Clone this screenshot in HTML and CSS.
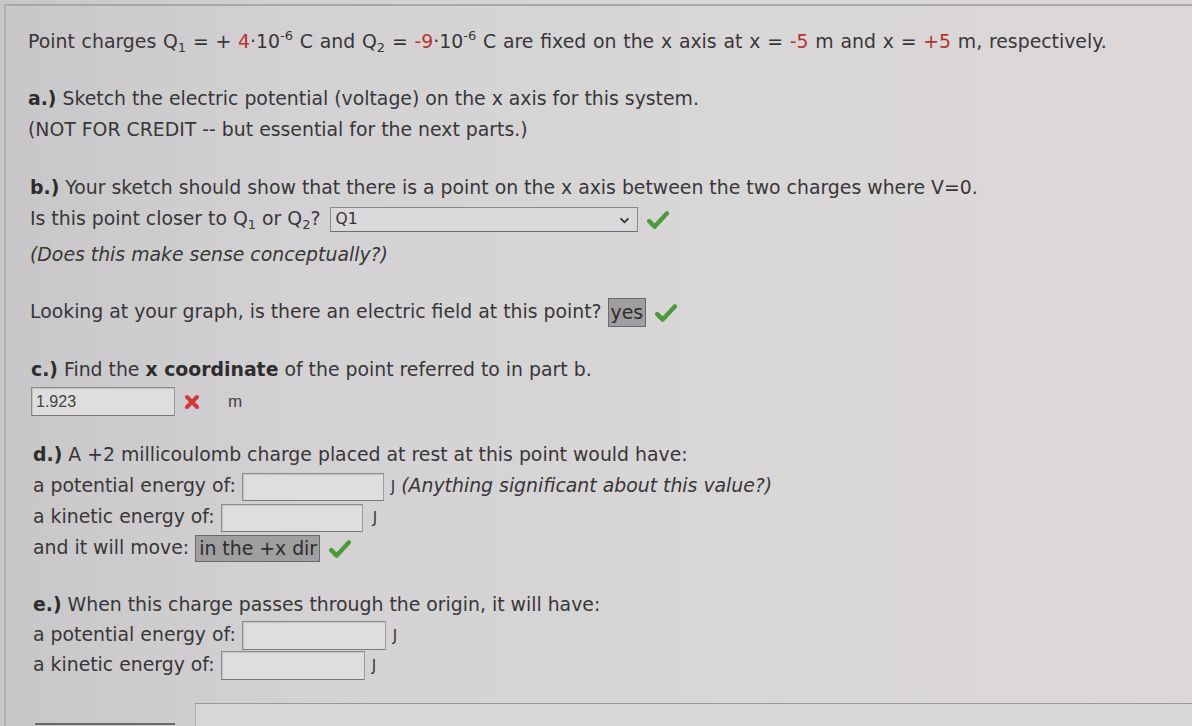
FILE: index.html
```html
<!DOCTYPE html>
<html>
<head>
<meta charset="utf-8">
<link rel="stylesheet" href="styles.css">
</head>
<body>
<div class="frame">
  <div class="content">
    <div class="sec s1">
      <div class="line intro">Point charges Q<sub>1</sub> = + <span class="red">4</span>·10<sup>-6</sup> C and Q<sub>2</sub> = <span class="red">-9</span>·10<sup>-6</sup> C are fixed on the x axis at x = <span class="red">-5</span> m and x = <span class="red">+5</span> m, respectively.</div>
    </div>

    <div class="sec sa">
      <div class="line"><b>a.)</b> Sketch the electric potential (voltage) on the x axis for this system.</div>
      <div class="line">(NOT FOR CREDIT -- but essential for the next parts.)</div>
    </div>

    <div class="sec sb">
      <div class="line"><b>b.)</b> Your sketch should show that there is a point on the x axis between the two charges where V=0.</div>
      <div class="line">Is this point closer to Q<sub>1</sub> or Q<sub>2</sub>? <span class="select"><span class="sel-val">Q1</span><svg class="chev" viewBox="0 0 12 8" width="11" height="7"><path d="M1.5 1.5 L6 6 L10.5 1.5" fill="none" stroke="#333" stroke-width="2"/></svg></span><svg class="check" viewBox="0 0 20 16" width="22" height="18"><path d="M2 9 L7 14 L18 2" fill="none" stroke="#4d9a3c" stroke-width="4" stroke-linecap="round" stroke-linejoin="round"/></svg></div>
      <div class="line gap"><i>(Does this make sense conceptually?)</i></div>
    </div>

    <div class="sec sl">
      <div class="line">Looking at your graph, is there an electric field at this point? <span class="chosen yes">yes</span><svg class="check" viewBox="0 0 20 16" width="22" height="18"><path d="M2 9 L7 14 L18 2" fill="none" stroke="#4d9a3c" stroke-width="4" stroke-linecap="round" stroke-linejoin="round"/></svg></div>
    </div>

    <div class="sec sc">
      <div class="line"><b>c.)</b> Find the <b>x coordinate</b> of the point referred to in part b.</div>
      <div class="line"><span class="input w144 val">1.923</span><svg class="cross" viewBox="0 0 16 16" width="16" height="16"><path d="M3 3 L13 13 M13 3 L3 13" stroke="#d03a3a" stroke-width="4" stroke-linecap="round"/></svg><span class="unit-m">m</span></div>
    </div>

    <div class="sec sd">
      <div class="line"><b>d.)</b> A +2 millicoulomb charge placed at rest at this point would have:</div>
      <div class="line">a potential energy of: <span class="input w142"></span><span class="unit">J</span> <i>(Anything significant about this value?)</i></div>
      <div class="line">a kinetic energy of: <span class="input w142"></span><span class="unit u2">J</span></div>
      <div class="line">and it will move: <span class="chosen dir">in the +x dir</span><svg class="check" viewBox="0 0 20 16" width="22" height="18"><path d="M2 9 L7 14 L18 2" fill="none" stroke="#4d9a3c" stroke-width="4" stroke-linecap="round" stroke-linejoin="round"/></svg></div>
    </div>

    <div class="sec se">
      <div class="line"><b>e.)</b> When this charge passes through the origin, it will have:</div>
      <div class="line l2">a potential energy of: <span class="input w144"></span><span class="unit">J</span></div>
      <div class="line l2">a kinetic energy of: <span class="input w144"></span><span class="unit">J</span></div>
    </div>

    <div class="bottom">
      <div class="btn-stub"></div>
      <div class="box-stub"></div>
    </div>
  </div>
</div>
</body>
</html>
```

FILE: styles.css
```css
html, body {
  margin: 0;
  padding: 0;
  height: 100%;
  overflow: hidden;
}
body {
  background: linear-gradient(90deg, #c8c6c8 0%, #d3d1d3 25%, #d9d6d8 60%, #dcd8da 100%);
  font-family: "DejaVu Sans", Verdana, sans-serif;
  font-size: 18.85px;
  color: #383638;
}
.frame {
  margin: 4px 0 0 4px;
  border-top: 2px solid #a9a7a9;
  border-left: 2px solid #b2b0b2;
  height: 730px;
  overflow: hidden;
}
.content {
  padding-left: 22px;
}
.sec { margin-top: 26px; }
.s1 { margin-top: 20px; }
.sb { margin-top: 27px; }
.sc { margin-top: 27px; }
.sd { margin-top: 23px; }
.line {
  height: 31px;
  line-height: 31px;
  white-space: nowrap;
}
.intro { word-spacing: 0.8px; }
.line.gap { margin-top: 5px; }
.line.l2 { height: 29.5px; line-height: 29.5px; }
b { font-weight: bold; color: #2e2c2e; }
.red { color: #b8322f; }
sub, sup { font-size: 13px; line-height: 0; position: relative; vertical-align: baseline; }
sub { top: 4px; }
sup { top: -8px; }
.sb .line, .sl .line { padding-left: 2px; }
.sc .line { padding-left: 3px; }
.sd .line, .se .line { padding-left: 5px; }

.select {
  display: inline-flex;
  vertical-align: middle;
  box-sizing: border-box;
  width: 308px;
  height: 25px;
  line-height: 23px;
  margin-left: 4px;
  border: 1px solid #8a888a;
  border-bottom-color: #6e6c6e;
  background: #dad8da;
  align-items: center;
  justify-content: space-between;
  padding: 0 7px 0 4px;
  font-size: 15.5px;
  color: #333;
}
.chev { margin-top: 2px; }
svg { vertical-align: middle; }
.check { margin-left: 9px; }

.chosen {
  display: inline-block;
  vertical-align: middle;
  box-sizing: border-box;
  background: #a09ea0;
  border: 1px solid #6a686a;
  color: #2e2c2e;
}
.yes { height: 29px; line-height: 27px; padding: 0 2px; }
.dir { height: 27px; line-height: 25px; padding: 0 2px 0 3px; }

.input {
  display: inline-block;
  vertical-align: middle;
  box-sizing: border-box;
  height: 29px;
  line-height: 27px;
  border: 1px solid #8c8a8c;
  border-right-color: #9c9a9c;
  border-bottom-color: #7a787a;
  background: #dfdddf;
  box-shadow: inset 1px 1px 1px #c4c2c4;
}
.w144 { width: 144px; }
.w142 { width: 142px; height: 28px; }
.val {
  font-family: "Liberation Sans", Arial, sans-serif;
  font-size: 16px;
  color: #444;
  padding-left: 4px;
}
.cross { margin-left: 9px; }
.unit-m {
  font-family: "Liberation Sans", Arial, sans-serif;
  font-size: 17px;
  margin-left: 28px;
  color: #444;
}
.unit { margin-left: 7px; font-size: 15px; }
.u2 { margin-left: 10px; }

.bottom {
  display: flex;
  align-items: flex-start;
  margin-top: 24px;
}
.btn-stub {
  width: 140px;
  height: 40px;
  margin-top: 20px;
  margin-left: 7px;
  border-top: 2px solid #6a686a;
}
.box-stub {
  flex: 1;
  margin-left: 20px;
  height: 60px;
  border-top: 1px solid #9a989a;
  border-left: 1px solid #b0aeb0;
  background: #d8d6d8;
}
```
